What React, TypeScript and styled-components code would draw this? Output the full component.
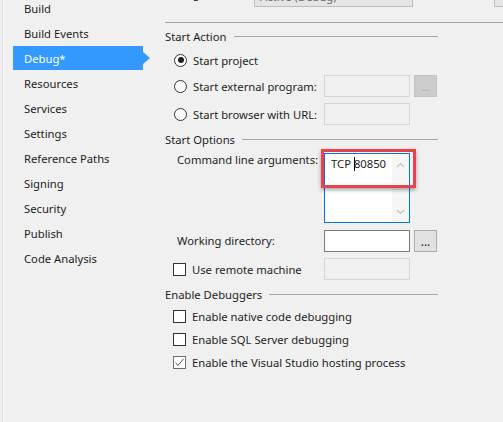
import React from 'react';
import styled, { createGlobalStyle } from 'styled-components';

const GlobalStyle = createGlobalStyle`
  html, body {
    margin: 0;
    padding: 0;
    background: #f0f0f0;
  }
  body {
    font-family: 'Noto Sans', 'Open Sans', sans-serif;
    font-size: 11.25px;
    color: #1e1e1e;
  }
`;

const NAV_ITEMS = [
  'Build',
  'Build Events',
  'Debug*',
  'Resources',
  'Services',
  'Settings',
  'Reference Paths',
  'Signing',
  'Security',
  'Publish',
  'Code Analysis',
];

export default function App() {
  return (
    <>
      <GlobalStyle />
      <Page>
        <Nav>
          {NAV_ITEMS.map((item) => (
            <NavItem key={item} $active={item === 'Debug*'}>
              {item}
            </NavItem>
          ))}
        </Nav>
        <Content>
          <TopBar>
            <TopLabel $width={89}>Configuration:</TopLabel>
            <Combo $width={159}>Active (Debug)</Combo>
            <TopLabel $width={58} $gap={23}>
              Platform:
            </TopLabel>
            <Combo $width={20} />
          </TopBar>
          <TopRule />

          <GroupHeader $top={5}>
            <span>Start Action</span>
            <HeaderLine />
          </GroupHeader>
          <FormRow $top={5}>
            <Option $indent={9}>
              <Radio $checked />
              <OptionText>Start project</OptionText>
            </Option>
          </FormRow>
          <FormRow $top={4}>
            <Option $indent={9}>
              <Radio />
              <OptionText>Start external program:</OptionText>
            </Option>
            <TextBox $disabled />
            <BrowseButton $disabled>...</BrowseButton>
          </FormRow>
          <FormRow $top={6}>
            <Option $indent={9}>
              <Radio />
              <OptionText>Start browser with URL:</OptionText>
            </Option>
            <TextBox $disabled />
          </FormRow>

          <GroupHeader $top={6}>
            <span>Start Options</span>
            <HeaderLine />
          </GroupHeader>
          <FormRow $top={6} $alignTop>
            <FieldLabel>Command line arguments:</FieldLabel>
            <ArgsWrap>
              <ArgsBox>
                <ArgsText>
                  TCP <Caret />
                  80850
                </ArgsText>
                <ScrollBar>
                  <svg width="9" height="6" viewBox="0 0 9 6">
                    <polyline points="1,5 4.5,1.5 8,5" fill="none" stroke="#c2c2c2" strokeWidth="1.2" />
                  </svg>
                  <svg width="9" height="6" viewBox="0 0 9 6">
                    <polyline points="1,1 4.5,4.5 8,1" fill="none" stroke="#c2c2c2" strokeWidth="1.2" />
                  </svg>
                </ScrollBar>
              </ArgsBox>
              <Callout />
            </ArgsWrap>
          </FormRow>
          <FormRow $top={7}>
            <FieldLabel>Working directory:</FieldLabel>
            <TextBox />
            <BrowseButton>...</BrowseButton>
          </FormRow>
          <FormRow $top={6}>
            <Option $indent={8}>
              <CheckBox />
              <OptionText>Use remote machine</OptionText>
            </Option>
            <TextBox $disabled />
          </FormRow>

          <GroupHeader $top={6}>
            <span>Enable Debuggers</span>
            <HeaderLine />
          </GroupHeader>
          <CheckList>
            <CheckRow>
              <CheckBox />
              <OptionText>Enable native code debugging</OptionText>
            </CheckRow>
            <CheckRow>
              <CheckBox />
              <OptionText>Enable SQL Server debugging</OptionText>
            </CheckRow>
            <CheckRow>
              <CheckBox $soft>
                <svg width="11" height="11" viewBox="0 0 11 11">
                  <polyline points="1.5,5.5 4,8.5 9.5,2" fill="none" stroke="#555" strokeWidth="1" />
                </svg>
              </CheckBox>
              <OptionText>Enable the Visual Studio hosting process</OptionText>
            </CheckRow>
          </CheckList>
        </Content>
      </Page>
    </>
  );
}

const Page = styled.div`
  display: flex;
  width: 503px;
  height: 422px;
  overflow: hidden;
`;

const Nav = styled.div`
  display: flex;
  flex-direction: column;
  flex-shrink: 0;
  width: 147px;
  margin-left: 2px;
  margin-top: -4px;
  border-left: 1px solid #dcdce6;
  box-shadow: inset 1px 0 0 #fbfbfb;
`;

const NavItem = styled.div<{ $active?: boolean }>`
  position: relative;
  display: flex;
  align-items: center;
  height: 24px;
  margin: 0 0 1px 10px;
  width: 130px;
  box-sizing: border-box;
  padding-left: 11px;
  white-space: nowrap;
  background: ${(p) => (p.$active ? '#3399ff' : 'transparent')};
  color: ${(p) => (p.$active ? '#ffffff' : '#1e1e1e')};

  &::after {
    content: '';
    display: ${(p) => (p.$active ? 'block' : 'none')};
    position: absolute;
    right: -7px;
    top: 6px;
    border-left: 7px solid #3399ff;
    border-top: 6px solid transparent;
    border-bottom: 6px solid transparent;
  }
`;

const Content = styled.div`
  flex: 1;
  display: flex;
  flex-direction: column;
  padding-left: 15px;
  min-width: 0;
`;

const TopBar = styled.div`
  display: flex;
  align-items: center;
  height: 22px;
  margin-top: -15px;
  white-space: nowrap;
`;

const TopLabel = styled.div<{ $width: number; $gap?: number }>`
  width: ${(p) => p.$width}px;
  margin-left: ${(p) => p.$gap ?? 0}px;
  padding-bottom: 5px;
  flex-shrink: 0;
`;

const Combo = styled.div<{ $width: number }>`
  width: ${(p) => p.$width}px;
  flex-shrink: 0;
  height: 22px;
  box-sizing: border-box;
  padding: 3px 5px 0;
  background: #e5e5e5;
  border: 1px solid #bdbdbd;
  color: #6d6d6d;
  overflow: hidden;
`;

const TopRule = styled.div`
  margin-top: 15px;
  height: 1px;
  background: #a6a6a6;
  margin-right: -20px;
`;

const GroupHeader = styled.div<{ $top: number }>`
  display: flex;
  align-items: center;
  width: 273px;
  height: 16px;
  margin-top: ${(p) => p.$top}px;
  white-space: nowrap;
`;

const HeaderLine = styled.div`
  flex: 1;
  height: 1px;
  margin-left: 7px;
  background: #a9a9a9;
`;

const FormRow = styled.div<{ $top: number; $alignTop?: boolean }>`
  display: grid;
  grid-template-columns: 155px 86px 23px;
  column-gap: 4px;
  align-items: ${(p) => (p.$alignTop ? 'start' : 'center')};
  min-height: 22px;
  margin-top: ${(p) => p.$top}px;
`;

const Option = styled.div<{ $indent: number }>`
  display: flex;
  align-items: center;
  padding-left: ${(p) => p.$indent}px;
  white-space: nowrap;
`;

const OptionText = styled.span`
  margin-left: 6px;
  white-space: nowrap;
`;

const FieldLabel = styled.div`
  padding-left: 12px;
  line-height: 14px;
  white-space: nowrap;
`;

const Radio = styled.span<{ $checked?: boolean }>`
  position: relative;
  width: 13px;
  height: 13px;
  box-sizing: border-box;
  border-radius: 50%;
  border: 1px solid #333333;
  background: #ffffff;
  flex-shrink: 0;

  &::after {
    content: '';
    display: ${(p) => (p.$checked ? 'block' : 'none')};
    position: absolute;
    left: 2.5px;
    top: 2.5px;
    width: 6px;
    height: 6px;
    border-radius: 50%;
    background: #1e1e1e;
  }
`;

const CheckBox = styled.span<{ $soft?: boolean }>`
  display: flex;
  align-items: center;
  justify-content: center;
  width: 13px;
  height: 13px;
  box-sizing: border-box;
  border: 1px solid ${(p) => (p.$soft ? '#6e6e6e' : '#333333')};
  background: #ffffff;
  flex-shrink: 0;
`;

const TextBox = styled.div<{ $disabled?: boolean }>`
  height: 22px;
  box-sizing: border-box;
  background: ${(p) => (p.$disabled ? '#f0f0f0' : '#ffffff')};
  border: 1px solid ${(p) => (p.$disabled ? '#d6d6d6' : '#7a7a7a')};
`;

const BrowseButton = styled.div<{ $disabled?: boolean }>`
  display: flex;
  align-items: center;
  justify-content: center;
  height: 22px;
  box-sizing: border-box;
  padding-top: 2px;
  background: ${(p) => (p.$disabled ? '#cccccc' : '#e1e1e1')};
  border: 1px solid ${(p) => (p.$disabled ? '#c2c2c2' : '#adadad')};
  color: ${(p) => (p.$disabled ? '#9a9a9a' : '#1e1e1e')};
  font-size: ${(p) => (p.$disabled ? '9px' : '12px')};
  line-height: 1;
`;

const ArgsWrap = styled.div`
  position: relative;
`;

const ArgsBox = styled.div`
  display: flex;
  height: 70px;
  box-sizing: border-box;
  border: 1px solid #0078d7;
  background: #ffffff;
`;

const ArgsText = styled.div`
  flex: 1;
  padding: 2px 0 0 6px;
  white-space: nowrap;
  line-height: 16px;
`;

const Caret = styled.span`
  display: inline-block;
  width: 1px;
  height: 14px;
  margin-right: -1px;
  vertical-align: -3px;
  background: #000000;
`;

const ScrollBar = styled.div`
  display: flex;
  flex-direction: column;
  align-items: center;
  justify-content: space-between;
  width: 17px;
  padding: 8px 0 7px;
  background: #f6f6f6;
`;

const Callout = styled.div`
  position: absolute;
  left: -3px;
  top: -4px;
  width: 95px;
  height: 39px;
  box-sizing: border-box;
  border: 3px solid #e8434c;
  box-shadow: 0 2px 4px rgba(0, 0, 0, 0.35);
`;

const CheckList = styled.div`
  display: flex;
  flex-direction: column;
  margin-top: 3px;
`;

const CheckRow = styled.div`
  display: flex;
  align-items: center;
  height: 23px;
  padding-left: 8px;
`;
